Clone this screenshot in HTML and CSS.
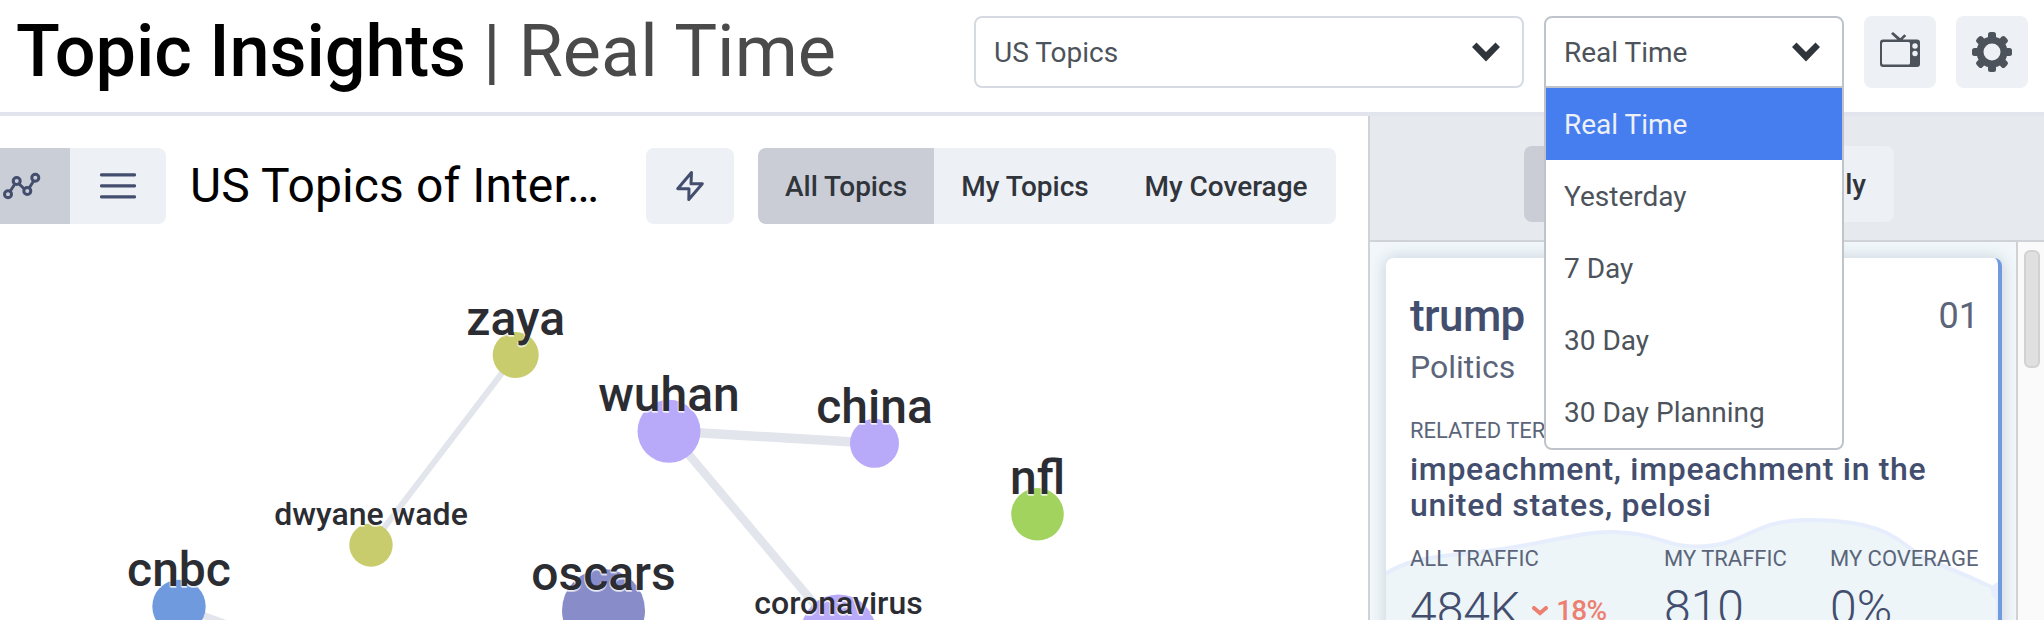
FILE: index.html
```html
<!DOCTYPE html>
<html lang="en">
<head>
<meta charset="utf-8">
<title>Topic Insights</title>
<link rel="stylesheet" href="styles.css">
</head>
<body>
<header class="topbar">
  <h1 class="title"><strong>Topic Insights</strong><span class="title-sub">| Real Time</span></h1>
  <div class="controls">
    <div class="select select-topics"><span>US Topics</span>
      <svg class="chevron" width="30" height="20" viewBox="0 0 30 20"><path d="M1 5 5.500 .5 15 10 24.500 .5 29 5 15 19.500z"/></svg>
    </div>
    <div class="select select-time"><span>Real Time</span>
      <svg class="chevron" width="30" height="20" viewBox="0 0 30 20"><path d="M1 5 5.500 .5 15 10 24.500 .5 29 5 15 19.500z"/></svg>
      <ul class="menu">
        <li class="option selected">Real Time</li>
        <li class="option">Yesterday</li>
        <li class="option">7 Day</li>
        <li class="option">30 Day</li>
        <li class="option">30 Day Planning</li>
      </ul>
    </div>
    <button class="icon-btn" aria-label="TV mode">
      <svg width="40" height="40" viewBox="0 0 40 40"><path fill="#4d535b" fill-rule="evenodd" d="M3 7.500h14.200L11 1.800 13 0l7.300 6.200 4-4 2 1.700-3.700 3.600H37a3 3 0 0 1 3 3V32a3 3 0 0 1-3 3H3a3 3 0 0 1-3-3V10.500a3 3 0 0 1 3-3zM3.500 10A1.500 1.500 0 0 0 2 11.500V31a1.500 1.500 0 0 0 1.500 1.500H28.500a1.500 1.500 0 0 0 1.500-1.500V11.500A1.500 1.500 0 0 0 28.500 10z"/><circle cx="35" cy="14" r="2.700" fill="#edf0f5"/><circle cx="35" cy="21.500" r="2.700" fill="#edf0f5"/></svg>
    </button>
    <button class="icon-btn" aria-label="Settings">
      <svg width="40" height="40" viewBox="-20 -20 40 40" fill="#4d535b"><circle r="12" fill="none" stroke="#4d535b" stroke-width="7"/><g id="teeth"><rect x="-4" y="-20" width="8" height="8" rx="2.500"/><rect x="-4" y="12" width="8" height="8" rx="2.500"/><rect x="-20" y="-4" width="8" height="8" rx="2.500"/><rect x="12" y="-4" width="8" height="8" rx="2.500"/></g><use href="#teeth" transform="rotate(45)"/></svg>
    </button>
  </div>
</header>
<main class="main">
  <section class="map">
    <div class="toolbar">
      <div class="view-toggle">
        <button class="view on" aria-label="Graph view"><svg width="38" height="28" viewBox="0 0 38 28"><path d="M5 22.500 13.500 9.500 24 19.500 32.500 6" fill="none" stroke="#434e6e" stroke-width="3"/><g fill="#cacfd7" stroke="#434e6e" stroke-width="3"><circle cx="5" cy="22.300" r="3.500"/><circle cx="13.700" cy="9" r="3.500"/><circle cx="24.300" cy="19" r="3.500"/><circle cx="32.300" cy="5.700" r="3.500"/></g></svg></button>
        <button class="view" aria-label="List view"><svg width="36" height="26" viewBox="0 0 36 26"><path d="M1.500 1.800h33M1.500 12.800h33M1.500 23.800h33" stroke="#434e6e" stroke-width="3.200" stroke-linecap="round"/></svg></button>
      </div>
      <h2 class="map-title">US Topics of Inter…</h2>
      <button class="bolt" aria-label="Live"><svg width="30" height="32" viewBox="0 0 30 32"><path d="M16.500 2.500 2.700 18.700H14L13.800 29.500 27.300 13.700H16z" fill="none" stroke="#434e6e" stroke-width="3" stroke-linejoin="round"/></svg></button>
      <div class="tabs"><button class="tab tab-all on">All Topics</button><button class="tab tab-topics">My Topics</button><button class="tab tab-cov">My Coverage</button></div>
    </div>
    <svg class="graph" width="1368" height="396" viewBox="0 224 1368 396">
      <g stroke="#e2e5ec">
        <path d="M515.700 355 371 545" stroke-width="6"/>
        <path d="M669 431 874.500 443.300" stroke-width="9.500"/>
        <path d="M669 431 838 632" stroke-width="8.500"/>
        <path d="M179 606.500 260 636" stroke-width="7"/>
      </g>
      <circle cx="515.700" cy="355" r="23" fill="#c8cc6c"/>
      <circle cx="371" cy="545" r="21.700" fill="#c8cc6c"/>
      <circle cx="669" cy="431.300" r="31.500" fill="#b9a9f9"/>
      <circle cx="874.500" cy="443.300" r="24.500" fill="#b9a9f9"/>
      <circle cx="1037.500" cy="514.300" r="26.300" fill="#a2d35f"/>
      <circle cx="179" cy="606.500" r="26.700" fill="#6f9bde"/>
      <circle cx="603.500" cy="610.500" r="41.500" fill="#888dc9"/>
      <circle cx="838.500" cy="632" r="37.500" fill="#b9a9f9"/>
      <g class="label label-lg">
        <text x="515.700" y="335">zaya</text>
        <text x="669" y="411">wuhan</text>
        <text x="874.500" y="423">china</text>
        <text x="1037.500" y="494">nfl</text>
        <text x="179" y="586">cnbc</text>
        <text x="603.500" y="590">oscars</text>
      </g>
      <g class="label label-md">
        <text x="371" y="525">dwyane wade</text>
        <text x="838.500" y="614">coronavirus</text>
      </g>
    </svg>
  </section>
  <aside class="panel">
    <div class="panel-head"><div class="period"><button class="period-btn on">Hourly</button><button class="period-btn last">Daily</button></div></div>
    <div class="panel-body">
      <div class="cards">
        <article class="card">
          <svg class="wave" width="612" height="362" viewBox="0 0 612 362"><path d="M-4 318C24 299 50 299 92 294C160 287 190 273 228 274C270 275 280 288 306 288.500C362 290 362 262 422 262C512 262 514 290 546 304C572 313 590 322 612 332V370H-4z" fill="#edf5f9" stroke="#e6edfc" stroke-width="4"/><circle cx="614" cy="333" r="9" fill="#e6edfc"/></svg>
          <div class="card-head"><h3 class="name">trump</h3><span class="rank">01</span></div>
          <div class="category">Politics</div>
          <div class="caption related">RELATED TERMS</div>
          <p class="terms">impeachment, impeachment in the united states, pelosi</p>
          <div class="stats">
            <div class="stat stat-all"><div class="caption">ALL TRAFFIC</div><div class="value">484K <span class="delta"><svg width="16" height="10" viewBox="0 0 16 10"><path d="M2 2 8 7.200 14 2" fill="none" stroke="#ec7f70" stroke-width="4" stroke-linecap="round"/></svg>18%</span></div></div>
            <div class="stat stat-mine"><div class="caption">MY TRAFFIC</div><div class="value">810</div></div>
            <div class="stat"><div class="caption">MY COVERAGE</div><div class="value">0%</div></div>
          </div>
        </article>
      </div>
      <div class="scrollbar"><div class="thumb"></div></div>
    </div>
  </aside>
</main>
</body>
</html>
```
FILE: styles.css
```css
* { box-sizing: border-box; }
body { margin: 0; width: 2044px; height: 620px; overflow: hidden; background: #fff; font-family: Roboto, sans-serif; display: flex; flex-direction: column; }
button { border: 0; margin: 0; padding: 0; background: #edf0f5; font: inherit; color: inherit; display: flex; align-items: center; justify-content: center; }
svg { display: block; }
h1, h2, h3, p, ul { margin: 0; padding: 0; font-weight: 400; list-style: none; }

.topbar { height: 116px; flex: none; border-bottom: 4px solid #e2e5ed; display: flex; justify-content: space-between; padding: 16px 16px 0 16px; }
.title { font-size: 72px; line-height: 72px; color: #000; white-space: nowrap; display: flex; gap: 17px; }
.title strong { font-weight: 500; letter-spacing: -.13px; }
.title-sub { color: #4a4a4a; }
.controls { display: flex; gap: 20px; }
.select { position: relative; height: 72px; border: 2px solid #d6dae1; border-radius: 8px; display: flex; align-items: center; justify-content: space-between; padding: 0 21px 0 18px; font-size: 28px; color: #4d535b; background: #fff; }
.select-topics { width: 550px; }
.select-time { width: 300px; border-color: #bfc4cb; border-radius: 8px 8px 0 0; }
.chevron { fill: #30353c; }
.menu { position: absolute; z-index: 5; top: 70px; left: -2px; width: 300px; background: #fff; border: 2px solid #bfc4cb; border-top: 0; border-radius: 0 0 8px 8px; overflow: hidden; }
.option { height: 72px; line-height: 73px; padding-left: 18px; }
.option.selected { background: #467eef; color: #edf0f6; }
.icon-btn { width: 72px; height: 72px; border-radius: 8px; }

.main { flex: 1; display: flex; min-height: 0; }
.map { width: 1368px; padding-top: 32px; display: flex; flex-direction: column; }
.toolbar { height: 76px; flex: none; display: flex; }
.view-toggle { display: flex; width: 166px; }
.view { width: 96px; border-radius: 0 8px 8px 0; }
.view.on { width: 70px; border-radius: 0; background: #cacfd7; justify-content: flex-start; padding-left: 3px; }
.map-title { width: 480px; padding-left: 24px; font-size: 48px; line-height: 76px; letter-spacing: .12px; white-space: nowrap; }
.bolt { width: 88px; border-radius: 8px; }
.tabs { margin-left: 24px; width: 578px; display: flex; border-radius: 8px; overflow: hidden; font-size: 28px; font-weight: 500; color: #30353c; }
.tab-all { width: 176px; }
.tab-topics { width: 182px; }
.tab-cov { width: 220px; }
.tab.on, .period-btn.on { background: #cacdd6; }
.graph { flex: none; }
.label { fill: #2b2d33; font-weight: 500; text-anchor: middle; text-shadow: 0 2px 0 rgba(255,255,255,.6), -1px 1px 0 rgba(255,255,255,.6); }
.label-lg { font-size: 48px; }
.label-md { font-size: 32px; }

.panel { width: 676px; border-left: 2px solid #cfd3d7; display: flex; flex-direction: column; }
.panel-head { height: 126px; flex: none; background: #e6e9ee; border-bottom: 2px solid #cfd2d7; padding: 30px 0 0 154px; }
.period { width: 370px; height: 76px; display: flex; border-radius: 8px; overflow: hidden; font-size: 28px; font-weight: 500; color: #30353c; }
.period-btn { width: 185px; }
.period-btn.last { justify-content: flex-end; padding-right: 28px; }
.panel-body { flex: 1; display: flex; min-height: 0; }
.cards { width: 646px; background: #f1f7fa; padding: 16px 14px 0 16px; overflow: hidden; }
.card { position: relative; height: 440px; background: #fff; border-right: 4px solid #6f9bde; border-radius: 8px; box-shadow: 0 0 16px rgba(50,70,100,.22); padding: 0 16px 0 24px; overflow: hidden; color: #5b6579; }
.wave { position: absolute; left: 0; top: 0; }
.card-head, .category, .related, .terms, .stats { position: relative; }
.card-head { display: flex; justify-content: space-between; padding: 32px 3px 0 0; height: 86px; }
.name { font-size: 44px; line-height: 52px; font-weight: 500; color: #434e6e; letter-spacing: -.6px; }
.rank { font-size: 36px; line-height: 52px; }
.category { font-size: 32px; line-height: 46px; }
.caption { font-size: 22px; line-height: 26px; white-space: nowrap; }
.related { margin-top: 28px; }
.terms { font-size: 32px; line-height: 36px; font-weight: 500; color: #434e6e; margin-top: 7px; letter-spacing: .68px; width: 560px; }
.stats { display: flex; margin-top: 23px; }
.stat-all { width: 254px; }
.stat-mine { width: 166px; }
.value { font-size: 48px; line-height: 56px; margin-top: 8px; font-weight: 300; color: #434e6e; display: flex; align-items: center; }
.delta { display: flex; align-items: center; gap: 8px; font-size: 28px; font-weight: 500; color: #ec7f70; margin-left: 12px; padding-top: 3px; letter-spacing: -.8px; }
.scrollbar { flex: 1; border-left: 2px solid #cfd2d4; background: #fafafa; padding: 8px 4px 0 6px; }
.thumb { height: 118px; border-radius: 6px; background: #e0e0e0; border: 2px solid #d2d2d2; }
```
